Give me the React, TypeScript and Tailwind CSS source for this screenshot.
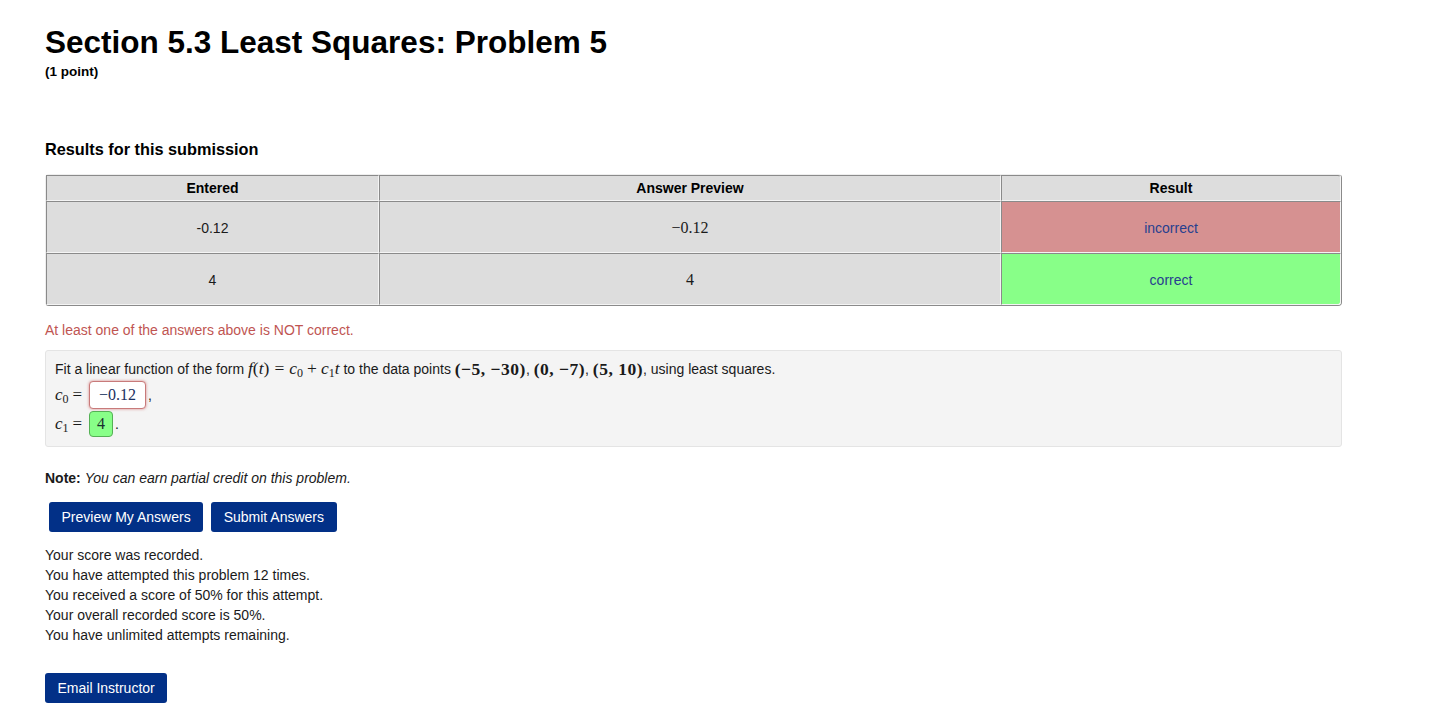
import React from "react";

const serif = { fontFamily: '"Liberation Serif", "DejaVu Serif", serif' };

function MI({ children }: { children: React.ReactNode }) {
  return <span className="italic" style={serif}>{children}</span>;
}

function Sub({ children }: { children: React.ReactNode }) {
  return <span className="text-[12px] relative top-[3px] not-italic">{children}</span>;
}

export default function App() {
  const cell =
    "border border-t-[#8a8a8a] border-l-[#8a8a8a] border-b-[#f4f4f4] border-r-[#f4f4f4] bg-[#dddddd] text-center";
  return (
    <div className="min-h-[710px] bg-white pl-[45px] text-[14px] text-[#1a1a1a] font-['Liberation_Sans',Arial,sans-serif]">
      <h1 className="pt-[24px] text-[31.5px] font-bold leading-[36px] text-black">
        Section 5.3 Least Squares: Problem 5
      </h1>
      <div className="mt-[5px] text-[13.5px] font-bold leading-[14px] text-black">(1 point)</div>

      <h2 className="mt-[60px] text-[16.3px] font-bold leading-[20px] text-black">Results for this submission</h2>

      <table className="mt-[15px] w-[1297px] table-fixed border-separate border-spacing-0 rounded-[4px] border border-t-[#eeeeee] border-l-[#eeeeee] border-b-[#8a8a8a] border-r-[#8a8a8a]">
        <colgroup>
          <col className="w-[333px]" />
          <col className="w-[622px]" />
          <col className="w-[340px]" />
        </colgroup>
        <thead>
          <tr>
            <th className={`${cell} h-[26px] font-bold text-black`}>Entered</th>
            <th className={`${cell} h-[26px] font-bold text-black`}>Answer Preview</th>
            <th className={`${cell} h-[26px] font-bold text-black rounded-tr-[3px]`}>Result</th>
          </tr>
        </thead>
        <tbody>
          <tr>
            <td className={`${cell} h-[52px] pt-[2px]`}>-0.12</td>
            <td className={`${cell} h-[52px] pt-[2px] text-[16px]`} style={serif}>−0.12</td>
            <td className={`${cell} h-[52px] pt-[2px] !bg-[#d69191] text-[#27408f]`}>incorrect</td>
          </tr>
          <tr>
            <td className={`${cell} h-[52px] pt-[2px]`}>4</td>
            <td className={`${cell} h-[52px] pt-[2px] text-[16px]`} style={serif}>4</td>
            <td className={`${cell} h-[52px] pt-[2px] !bg-[#88ff88] text-[#27408f] rounded-br-[3px]`}>correct</td>
          </tr>
        </tbody>
      </table>

      <div className="mt-[14px] leading-[20px] text-[#c05552]">At least one of the answers above is NOT correct.</div>

      <div className="mt-[10px] w-[1297px] rounded-[3px] border border-[#e4e4e4] bg-[#f4f4f4] px-[9px] pt-[8px] pb-[9px]">
        <div className="flex h-[20px] items-center leading-[20px]">
          <span>Fit a linear function of the form&nbsp;</span>
          <span className="text-[17.5px]" style={serif}>
            <MI>f</MI>(<MI>t</MI>)<span className="mx-[5px]">=</span><MI>c</MI><Sub>0</Sub><span className="mx-[4px]">+</span><MI>c</MI><Sub>1</Sub><MI>t</MI>
          </span>
          <span>&nbsp;to the data points&nbsp;</span>
          <span className="text-[17.5px] font-bold tracking-[0.5px]" style={serif}>(−5,&nbsp;−30)</span>
          <span>,&nbsp;</span>
          <span className="text-[17.5px] font-bold tracking-[0.5px]" style={serif}>(0,&nbsp;−7)</span>
          <span>,&nbsp;</span>
          <span className="text-[17.5px] font-bold tracking-[0.5px]" style={serif}>(5,&nbsp;10)</span>
          <span>, using least squares.</span>
        </div>
        <div className="mt-[2px] flex h-[28px] items-center">
          <span className="w-[34px] text-[17px]" style={serif}>
            <MI>c</MI><Sub>0</Sub><span className="ml-[4px]">=</span>
          </span>
          <span
            className="flex h-[28px] w-[57px] items-center justify-center rounded-[4px] border border-[#c87a7a] bg-white text-[16px] text-[#1a2f60] shadow-[0_0_3px_rgba(200,60,60,0.6)]"
            style={serif}
          >
            −0.12
          </span>
          <span className="ml-[2px]">,</span>
        </div>
        <div className="mt-[2px] flex h-[26px] items-center">
          <span className="w-[34px] text-[17px]" style={serif}>
            <MI>c</MI><Sub>1</Sub><span className="ml-[4px]">=</span>
          </span>
          <span
            className="flex h-[26px] w-[24px] items-center justify-center rounded-[4px] border border-[#55b055] bg-[#88ff88] text-[16px] text-[#1a2f30]"
            style={serif}
          >
            4
          </span>
          <span className="ml-[2px]">.</span>
        </div>
      </div>

      <div className="mt-[21px] leading-[20px]">
        <span className="font-bold">Note:</span> <i>You can earn partial credit on this problem.</i>
      </div>

      <div className="mt-[14px] ml-[4px] flex gap-[8px]">
        <button className="h-[30px] rounded-[3px] bg-[#023087] px-[12.5px] text-[14px] text-white">Preview My Answers</button>
        <button className="h-[30px] rounded-[3px] bg-[#023087] px-[12.5px] text-[14px] text-white">Submit Answers</button>
      </div>

      <div className="mt-[13px] leading-[20px]">
        <div>Your score was recorded.</div>
        <div>You have attempted this problem 12 times.</div>
        <div>You received a score of 50% for this attempt.</div>
        <div>Your overall recorded score is 50%.</div>
        <div>You have unlimited attempts remaining.</div>
      </div>

      <button className="mt-[28px] h-[30px] rounded-[3px] bg-[#023087] px-[12.5px] text-[14px] text-white">Email Instructor</button>
    </div>
  );
}
